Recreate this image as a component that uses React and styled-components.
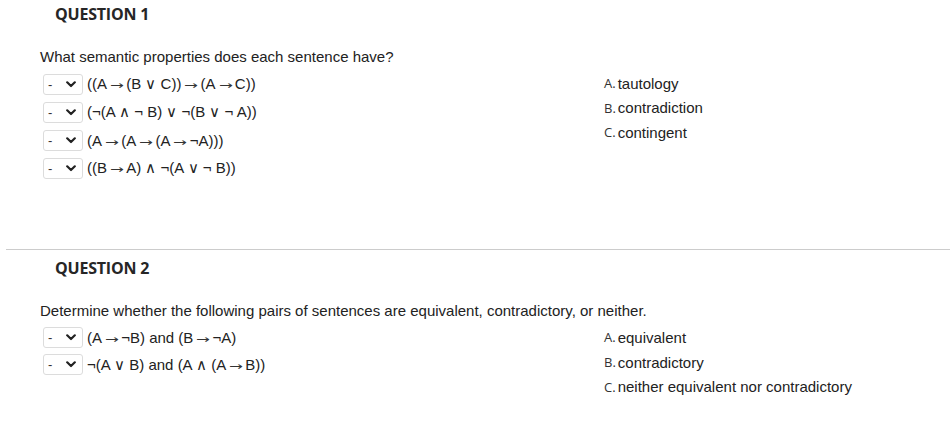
import React from 'react';
import styled, { createGlobalStyle } from 'styled-components';

const GlobalStyle = createGlobalStyle`
  html, body {
    margin: 0;
    padding: 0;
    background: #ffffff;
  }
  body {
    font-family: Arial, "Liberation Sans", sans-serif;
    color: #222222;
  }
`;

const questions = [
  {
    title: 'QUESTION 1',
    prompt: 'What semantic properties does each sentence have?',
    rowHeight: 28,
    optionHeight: 24.5,
    sentences: [
      '((A → (B ∨ C)) → (A → C))',
      '(¬(A ∧ ¬ B) ∨ ¬(B ∨ ¬ A))',
      '(A → (A → (A → ¬A)))',
      '((B → A) ∧ ¬(A ∨ ¬ B))',
    ],
    options: ['tautology', 'contradiction', 'contingent'],
  },
  {
    title: 'QUESTION 2',
    prompt:
      'Determine whether the following pairs of sentences are equivalent, contradictory, or neither.',
    rowHeight: 27,
    optionHeight: 24.8,
    sentences: ['(A → ¬B) and (B → ¬A)', '¬(A ∨ B) and (A ∧ (A → B))'],
    options: ['equivalent', 'contradictory', 'neither equivalent nor contradictory'],
  },
];

function Formula({ text }) {
  const parts = text.split(' → ');
  return (
    <Sentence>
      {parts.map((p, i) => (
        <React.Fragment key={i}>
          {i > 0 && <Arrow>→</Arrow>}
          {p}
        </React.Fragment>
      ))}
    </Sentence>
  );
}

function Chevron() {
  return (
    <ChevronIcon width="10" height="7" viewBox="0 0 10 7">
      <path d="M1.2 1.3 L5 5 L8.8 1.3" fill="none" stroke="#222" strokeWidth="2.2" strokeLinecap="round" strokeLinejoin="round" />
    </ChevronIcon>
  );
}

function Question({ q, first }) {
  return (
    <Section first={first}>
      <Heading>{q.title}</Heading>
      <Prompt>{q.prompt}</Prompt>
      <Body>
        <SentenceList>
          {q.sentences.map((s) => (
            <SentenceRow key={s} h={q.rowHeight}>
              <SelectWrap>
                <Select defaultValue="-">
                  <option value="-">-</option>
                  <option value="A">A</option>
                  <option value="B">B</option>
                  <option value="C">C</option>
                </Select>
                <Chevron />
              </SelectWrap>
              <Formula text={s} />
            </SentenceRow>
          ))}
        </SentenceList>
        <OptionList>
          {q.options.map((o, i) => (
            <OptionRow key={o} h={q.optionHeight}>
              <Letter>{String.fromCharCode(65 + i)}.</Letter>
              <OptionText>{o}</OptionText>
            </OptionRow>
          ))}
        </OptionList>
      </Body>
    </Section>
  );
}

function App() {
  return (
    <Page>
      <GlobalStyle />
      <Question q={questions[0]} first />
      <Divider />
      <Question q={questions[1]} />
    </Page>
  );
}

const Page = styled.div`
  width: 950px;
  height: 427px;
  overflow: hidden;
  padding-top: 4px;
  box-sizing: border-box;
`;

const Section = styled.div`
  padding-top: ${(p) => (p.first ? '0' : '8px')};
`;

const Heading = styled.div`
  font-family: "Open Sans", sans-serif;
  font-weight: 700;
  font-size: 16px;
  line-height: 20px;
  color: #262626;
  margin-left: 55px;
  letter-spacing: -0.2px;
`;

const Prompt = styled.div`
  font-size: 15px;
  line-height: 20px;
  margin: 23px 0 3px 40px;
  color: #222;
`;

const Body = styled.div`
  display: flex;
  padding-left: 43px;
`;

const SentenceList = styled.div`
  width: 561px;
`;

const SentenceRow = styled.div`
  display: flex;
  align-items: center;
  height: ${(p) => p.h}px;
  gap: 4px;
`;

const SelectWrap = styled.div`
  position: relative;
  width: 40px;
  height: 21px;
`;

const Select = styled.select`
  appearance: none;
  width: 40px;
  height: 21px;
  box-sizing: border-box;
  border: 1px solid #dcdcdc;
  border-radius: 3px;
  background: #ffffff;
  font-family: Arial, "Liberation Sans", sans-serif;
  font-size: 13px;
  color: #333;
  padding: 0 0 0 4px;
  margin: 0;
`;

const ChevronIcon = styled.svg`
  position: absolute;
  top: 7px;
  left: 23px;
  pointer-events: none;
`;

const Sentence = styled.span`
  font-size: 15px;
  color: #222;
  white-space: pre;
`;

const Arrow = styled.span`
  display: inline-block;
  font-family: "DejaVu Sans", sans-serif;
  font-size: 11px;
  margin: 0 5px;
  color: #333;
  transform: scaleX(1.5);
`;

const OptionList = styled.div`
  padding-top: 1px;
`;

const OptionRow = styled.div`
  display: flex;
  align-items: center;
  height: ${(p) => p.h}px;
  gap: 2px;
`;

const Letter = styled.span`
  font-family: "Open Sans", sans-serif;
  font-size: 13px;
  color: #333;
`;

const OptionText = styled.span`
  font-size: 15px;
  color: #222;
`;

const Divider = styled.div`
  height: 1px;
  background: #cccccc;
  margin: 67px 0 0 6px;
`;

export default App;
